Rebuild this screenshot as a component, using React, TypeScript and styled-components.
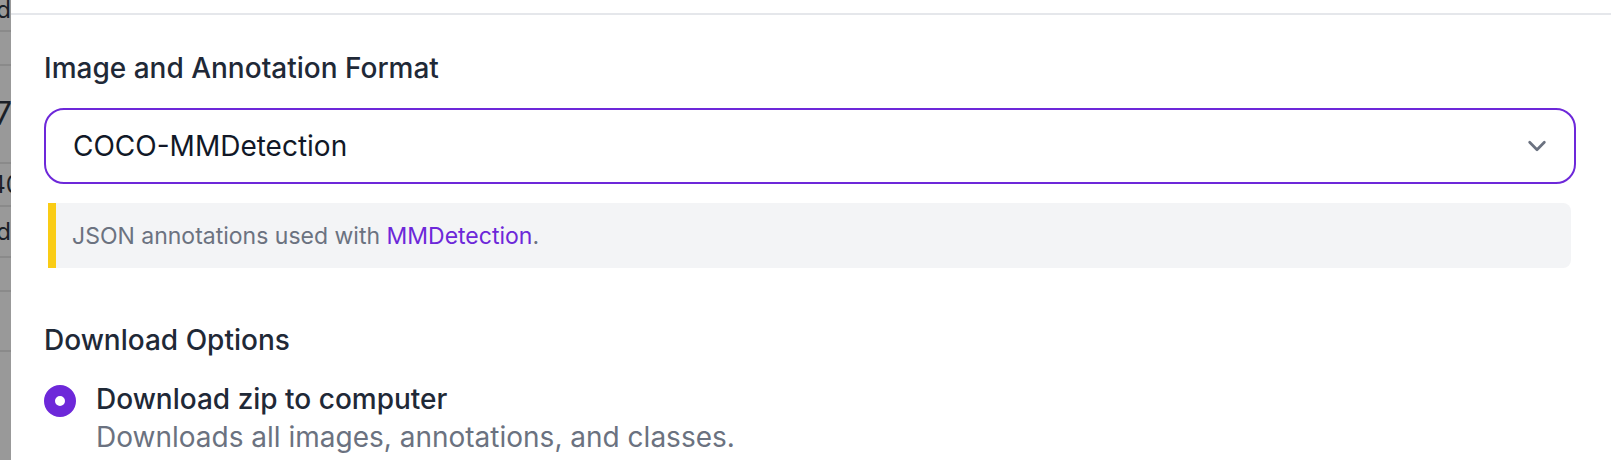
import styled, { createGlobalStyle } from 'styled-components';

const Global = createGlobalStyle`
  html, body { margin: 0; padding: 0; background: #ffffff; }
  body { font-family: Inter, "Noto Sans", sans-serif; -webkit-font-smoothing: antialiased; }
`;

const Page = styled.div`
  display: flex;
  height: 460px;
  overflow: hidden;
`;

/* the dimmed table behind the modal */
const Backdrop = styled.div`
  width: 11px;
  flex: none;
  background: #999999;
  overflow: hidden;
  display: flex;
  flex-direction: column;
`;

const BackRow = styled.div<{ $h: number; $size?: number; $pb?: number }>`
  height: ${(p) => p.$h}px;
  flex: none;
  box-sizing: border-box;
  padding-bottom: ${(p) => p.$pb ?? 0}px;
  border-bottom: 2px solid #8a8a8a;
  display: flex;
  align-items: center;
  justify-content: flex-end;
  white-space: nowrap;
  font-size: ${(p) => p.$size ?? 24}px;
  color: #1b1f27;
  line-height: 1;
`;

const BackCell = styled.span<{ $cut?: number }>`
  margin-right: ${(p) => -(p.$cut ?? 0)}px;
`;

const Panel = styled.div`
  flex: 1;
  background: #ffffff;
  display: flex;
  flex-direction: column;
`;

const PanelHeader = styled.div`
  height: 13px;
  flex: none;
  border-bottom: 2px solid #e5e7eb;
`;

const Body = styled.div`
  padding: 36px 35px 0 33px;
  display: flex;
  flex-direction: column;
`;

const SectionTitle = styled.h3`
  margin: 0;
  font-size: 28px;
  font-weight: 500;
  line-height: 34px;
  color: #1f2937;
`;

const Select = styled.div`
  margin-top: 23px;
  height: 76px;
  box-sizing: border-box;
  border: 2px solid #6d28d9;
  border-radius: 20px;
  display: flex;
  align-items: center;
  justify-content: space-between;
  padding: 0 26px 0 27px;
  font-size: 28px;
  color: #111827;
`;

const Chevron = () => (
  <svg width="22" height="22" viewBox="0 0 24 24" fill="none" stroke="#6b7280" strokeWidth="3" strokeLinecap="round" strokeLinejoin="round">
    <path d="M4 8l8 8 8-8" />
  </svg>
);

const Note = styled.div`
  margin: 19px 5px 0 4px;
  height: 65px;
  box-sizing: border-box;
  background: #f3f4f6;
  border-left: 8px solid #facc15;
  border-radius: 0 8px 8px 0;
  display: flex;
  align-items: center;
  padding-left: 16px;
  font-size: 23px;
  color: #6b7280;
`;

const Link = styled.a`
  color: #6d28d9;
  text-decoration: none;
`;

const Spacer = styled.div<{ $h: number }>`
  height: ${(p) => p.$h}px;
`;

const Option = styled.label`
  margin-top: 23px;
  display: flex;
  gap: 20px;
  align-items: flex-start;
`;

const Radio = styled.span<{ $checked: boolean }>`
  flex: none;
  width: 32px;
  height: 32px;
  margin-top: 5px;
  border-radius: 50%;
  box-sizing: border-box;
  background: #ffffff;
  border: ${(p) => (p.$checked ? '11px solid #6d28d9' : '2px solid #d1d5db')};
`;

const OptionText = styled.div`
  display: flex;
  flex-direction: column;
`;

const OptionTitle = styled.span`
  font-size: 28px;
  font-weight: 500;
  line-height: 38px;
  color: #1f2937;
`;

const OptionDesc = styled.span`
  font-size: 28px;
  line-height: 38px;
  color: #6b7280;
`;

export default function App() {
  return (
    <Page>
      <Global />
      <Backdrop>
        <BackRow $h={32} $pb={10}><BackCell>d</BackCell></BackRow>
        <BackRow $h={34} />
        <BackRow $h={98} $size={32}><BackCell $cut={1}>7</BackCell></BackRow>
        <BackRow $h={43}><BackCell $cut={10}>140</BackCell></BackRow>
        <BackRow $h={51}><BackCell>d</BackCell></BackRow>
        <BackRow $h={34} />
        <BackRow $h={60} />
      </Backdrop>
      <Panel>
        <PanelHeader />
        <Body>
          <SectionTitle>Image and Annotation Format</SectionTitle>
          <Select>
            <span>COCO-MMDetection</span>
            <Chevron />
          </Select>
          <Note>
            <span>
              JSON annotations used with <Link>MMDetection</Link>.
            </span>
          </Note>
          <Spacer $h={55} />
          <SectionTitle>Download Options</SectionTitle>
          <Option>
            <Radio $checked />
            <OptionText>
              <OptionTitle>Download zip to computer</OptionTitle>
              <OptionDesc>Downloads all images, annotations, and classes.</OptionDesc>
            </OptionText>
          </Option>
        </Body>
      </Panel>
    </Page>
  );
}
